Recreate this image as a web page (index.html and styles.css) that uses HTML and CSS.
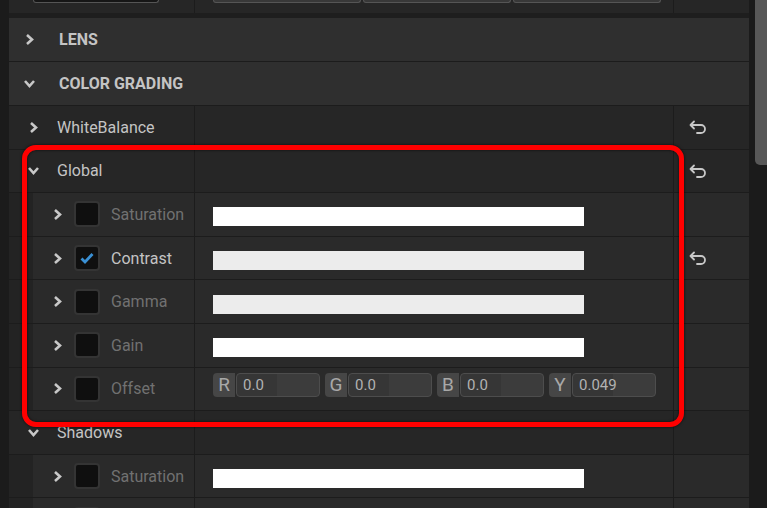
FILE: index.html
```html
<!DOCTYPE html>
<html lang="en">
<head>
  <meta charset="UTF-8" />
  <title>Details - Color Grading</title>
  <link rel="stylesheet" href="styles.css">
</head>
<body>
  <div class="panel">
    <div class="list">

      <!-- previous property, scrolled mostly out of view -->
      <div class="row top">
        <div class="cell name"><span class="stub stub-name"></span></div>
        <div class="cell value">
          <span class="stub"></span><span class="stub"></span><span class="stub"></span>
        </div>
        <div class="cell reset"></div>
      </div>

      <div class="category">
        <span class="slot"><svg class="chev-r" viewBox="0 0 9 13"><path d="M2 2 L7 6.5 L2 11"/></svg></span>
        LENS
      </div>
      <div class="category">
        <span class="slot"><svg class="chev-d" viewBox="0 0 13 9"><path d="M2 2 L6.5 7 L11 2"/></svg></span>
        COLOR GRADING
      </div>

      <div class="row">
        <div class="cell name">
          <span class="slot"><svg class="chev-r" viewBox="0 0 9 13"><path d="M2 2 L7 6.5 L2 11"/></svg></span>
          <span class="label">WhiteBalance</span>
        </div>
        <div class="cell value"></div>
        <div class="cell reset">
          <svg class="undo" viewBox="0 0 20 14"><path d="M6 1.5 L2.5 5 L6 8.5 M2.5 5 H13 A4 4 0 0 1 13 13 H9"/></svg>
        </div>
      </div>

      <div class="row">
        <div class="cell name">
          <span class="slot"><svg class="chev-d" viewBox="0 0 13 9"><path d="M2 2 L6.5 7 L11 2"/></svg></span>
          <span class="label">Global</span>
        </div>
        <div class="cell value"></div>
        <div class="cell reset">
          <svg class="undo" viewBox="0 0 20 14"><path d="M6 1.5 L2.5 5 L6 8.5 M2.5 5 H13 A4 4 0 0 1 13 13 H9"/></svg>
        </div>
      </div>

      <div class="row nested">
        <div class="cell name">
          <span class="slot"><svg class="chev-r" viewBox="0 0 9 13"><path d="M2 2 L7 6.5 L2 11"/></svg></span>
          <span class="check"></span>
          <span class="label off">Saturation</span>
        </div>
        <div class="cell value"><span class="bar"></span></div>
        <div class="cell reset"></div>
      </div>

      <div class="row nested">
        <div class="cell name">
          <span class="slot"><svg class="chev-r" viewBox="0 0 9 13"><path d="M2 2 L7 6.5 L2 11"/></svg></span>
          <span class="check">
            <svg viewBox="0 0 26 26"><path d="M7.5 13.5 L11 17 L18.5 9"/></svg>
          </span>
          <span class="label">Contrast</span>
        </div>
        <div class="cell value"><span class="bar grey"></span></div>
        <div class="cell reset">
          <svg class="undo" viewBox="0 0 20 14"><path d="M6 1.5 L2.5 5 L6 8.5 M2.5 5 H13 A4 4 0 0 1 13 13 H9"/></svg>
        </div>
      </div>

      <div class="row nested">
        <div class="cell name">
          <span class="slot"><svg class="chev-r" viewBox="0 0 9 13"><path d="M2 2 L7 6.5 L2 11"/></svg></span>
          <span class="check"></span>
          <span class="label off">Gamma</span>
        </div>
        <div class="cell value"><span class="bar grey"></span></div>
        <div class="cell reset"></div>
      </div>

      <div class="row nested">
        <div class="cell name">
          <span class="slot"><svg class="chev-r" viewBox="0 0 9 13"><path d="M2 2 L7 6.5 L2 11"/></svg></span>
          <span class="check"></span>
          <span class="label off">Gain</span>
        </div>
        <div class="cell value"><span class="bar"></span></div>
        <div class="cell reset"></div>
      </div>

      <div class="row nested">
        <div class="cell name">
          <span class="slot"><svg class="chev-r" viewBox="0 0 9 13"><path d="M2 2 L7 6.5 L2 11"/></svg></span>
          <span class="check"></span>
          <span class="label off">Offset</span>
        </div>
        <div class="cell value">
          <div class="vec">
            <div class="comp"><span class="axis">R</span><span class="num">0.0</span></div>
            <div class="comp"><span class="axis">G</span><span class="num">0.0</span></div>
            <div class="comp"><span class="axis">B</span><span class="num">0.0</span></div>
            <div class="comp"><span class="axis">Y</span><span class="num">0.049</span></div>
          </div>
        </div>
        <div class="cell reset"></div>
      </div>

      <div class="row">
        <div class="cell name">
          <span class="slot"><svg class="chev-d" viewBox="0 0 13 9"><path d="M2 2 L6.5 7 L11 2"/></svg></span>
          <span class="label">Shadows</span>
        </div>
        <div class="cell value"></div>
        <div class="cell reset"></div>
      </div>

      <div class="row nested">
        <div class="cell name">
          <span class="slot"><svg class="chev-r" viewBox="0 0 9 13"><path d="M2 2 L7 6.5 L2 11"/></svg></span>
          <span class="check"></span>
          <span class="label off">Saturation</span>
        </div>
        <div class="cell value"><span class="bar"></span></div>
        <div class="cell reset"></div>
      </div>

      <div class="row nested">
        <div class="cell name">
          <span class="slot"></span>
          <span class="check"></span>
        </div>
        <div class="cell value"></div>
        <div class="cell reset"></div>
      </div>
    </div>

    <div class="scrollbar"><div class="thumb"></div></div>
  </div>

  <!-- red callout drawn over the Global group -->
  <div class="callout"></div>
</body>
</html>
```

FILE: styles.css
```css
html,
body {
  overflow: hidden;
}

body {
  margin: 0;
  background: #1b1b1b;
  font-family: Roboto, "Liberation Sans", sans-serif;
  color: #c6c6c6;
  height: 508px;
  position: relative;
}

.panel {
  display: flex;
  padding-left: 9px;
  height: 508px;
  overflow: hidden;
}

.list {
  width: 740px;
}

/* rows */
.row {
  display: grid;
  grid-template-columns: 186px 479px 75px;
  height: 42.6px;
  border-bottom: 1px solid #1c1c1c;
  background: #262626;
}

.cell {
  display: flex;
  align-items: center;
  min-width: 0;
}

.cell.name,
.cell.value {
  border-right: 1px solid #1c1c1c;
}

.row.nested {
  background: #2a2a2a;
}

.row.nested .cell.name {
  background: linear-gradient(to right, #232323 0 24px, #2a2a2a 24px);
  padding-left: 43px;
}

.row .cell.name {
  padding-left: 18px;
}

/* partly hidden row at the top */
.row.top {
  height: 13px;
  border-bottom: 5px solid #1e1e1e;
}

.row.top .cell {
  align-items: flex-start;
}

.row.top .cell.name {
  padding-left: 24px;
}

.row.top .cell.value {
  padding-left: 18px;
  gap: 2px;
}

.stub {
  width: 146px;
  height: 2px;
  background: #383838;
  border: 1px solid #555;
  border-top: none;
  border-radius: 0 0 5px 5px;
}

.stub-name {
  width: 124px;
  background: #161616;
}

/* category headers */
.category {
  display: flex;
  align-items: center;
  height: 43px;
  border-bottom: 1px solid #1c1c1c;
  background: #2f2f2f;
  padding-left: 13px;
  font-size: 16px;
  font-weight: bold;
  color: #c4c4c4;
}

.category .slot {
  width: 14px;
  margin-right: 23px;
}

/* chevrons */
.slot {
  display: flex;
  align-items: center;
  justify-content: center;
  width: 13px;
  flex-shrink: 0;
}

.row .slot {
  margin-right: 17px;
}

.row.nested .slot {
  width: 11px;
  margin-right: 11px;
}

.chev-r {
  width: 9px;
  height: 13px;
}

.chev-d {
  width: 13px;
  height: 9px;
}

.chev-r path,
.chev-d path {
  fill: none;
  stroke: #c8c8c8;
  stroke-width: 2.6;
}

.label {
  font-size: 16px;
  color: #c4c4c4;
  white-space: nowrap;
}

.label.off {
  color: #717171;
}

/* checkbox */
.check {
  width: 22px;
  height: 22px;
  flex-shrink: 0;
  background: #0f0f0f;
  border: 2px solid #343434;
  border-radius: 4px;
  margin-right: 11px;
  position: relative;
}

.check svg {
  position: absolute;
  left: -2px;
  top: -2px;
  width: 26px;
  height: 26px;
}

.check path {
  fill: none;
  stroke: #3a90d4;
  stroke-width: 2.8;
}

/* value column */
.cell.value {
  padding-left: 18px;
}

.bar {
  width: 371px;
  height: 19px;
  margin-top: 5px;
  background: #fff;
}

.bar.grey {
  background: #ececec;
}

.vec {
  display: flex;
  gap: 5px;
  margin-bottom: 7px;
}

.comp {
  display: flex;
  gap: 1px;
  height: 24px;
}

.axis {
  width: 22px;
  background: #464646;
  border-radius: 4px 0 0 4px;
  color: #a8a8a8;
  font-size: 19px;
  line-height: 24px;
  text-align: center;
}

.num {
  box-sizing: border-box;
  width: 84px;
  border: 1px solid #4d4d4d;
  border-radius: 4px;
  background: linear-gradient(to right, #363636 0 40px, #3c3c3c 40px);
  color: #b2b2b2;
  font-size: 15px;
  line-height: 22px;
  padding-left: 6px;
}

/* reset column */
.cell.reset {
  padding-left: 14px;
}

.undo {
  width: 20px;
  height: 14px;
}

.undo path {
  fill: none;
  stroke: #c8c8c8;
  stroke-width: 1.8;
  stroke-linecap: round;
  stroke-linejoin: round;
}

/* scrollbar */
.scrollbar {
  width: 18px;
  padding-left: 6px;
  box-sizing: border-box;
}

.thumb {
  height: 165px;
  background: #585858;
  border-radius: 0 0 0 5px;
}

.callout {
  position: absolute;
  left: 22px;
  top: 145px;
  width: 662px;
  height: 282px;
  box-sizing: border-box;
  border: 5px solid #ff0000;
  border-radius: 14px;
  box-shadow: 0 0 3px rgba(0, 0, 0, 0.7), inset 0 0 3px rgba(0, 0, 0, 0.7);
}
```
